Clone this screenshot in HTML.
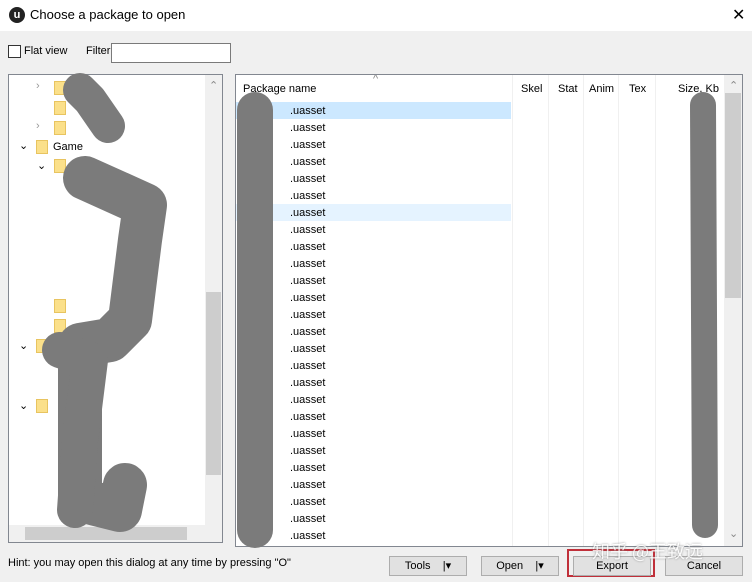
<!DOCTYPE html><html><head><style>
body{margin:0;width:752px;height:582px;background:#f0f0f0;font-family:"Liberation Sans",sans-serif;font-size:11px;color:#000;position:relative;overflow:hidden}
.a{position:absolute}
.btn{position:absolute;top:556px;height:18px;background:#e1e1e1;border:1px solid #adadad;text-align:center;line-height:18px;font-size:11px}
.f{position:absolute;width:12px;height:14px;background:#fbe08a;border:1px solid #e8c460;box-sizing:border-box}
.ch{position:absolute;color:#888;font-size:11px}
.gt{position:absolute;color:#999;font-size:11px}
</style></head><body>
<div class="a" style="left:0;top:0;width:752px;height:31px;background:#fff"></div>
<div class="a" style="left:9px;top:7px;width:16px;height:16px;border-radius:50%;background:#222;color:#fff;font-size:11px;font-weight:bold;text-align:center;line-height:16px">u</div>
<div class="a" style="left:30px;top:7px;font-size:13px">Choose a package to open</div>
<div class="a" style="left:732px;top:5px;font-size:16px">✕</div>
<div class="a" style="left:8px;top:45px;width:11px;height:11px;border:1px solid #333;background:#fff"></div>
<div class="a" style="left:24px;top:45px">Flat view</div>
<div class="a" style="left:86px;top:45px">Filter:</div>
<div class="a" style="left:111px;top:43px;width:118px;height:18px;border:1px solid #7a7a7a;background:#fff"></div>
<div class="a" style="left:8px;top:74px;width:213px;height:467px;border:1px solid #828790;background:#fff;overflow:hidden">
<div class="a" style="left:196px;top:0;width:17px;height:467px;background:#f0f0f0"></div>
<div class="a" style="left:197px;top:217px;width:15px;height:183px;background:#cdcdcd"></div>
<div class="a" style="left:0;top:450px;width:196px;height:17px;background:#f0f0f0"></div>
<div class="a" style="left:16px;top:452px;width:162px;height:13px;background:#cdcdcd"></div>
<div class="ch" style="left:200px;top:4px">⌃</div>
<div class="gt" style="left:27px;top:5px">›</div><div class="gt" style="left:27px;top:45px">›</div>
<div class="a" style="left:10px;top:64px">⌄</div><div class="a" style="left:28px;top:84px">⌄</div>
<div class="a" style="left:10px;top:264px">⌄</div><div class="a" style="left:10px;top:324px">⌄</div>
<div class="f" style="left:27px;top:65px"></div>
<div class="a" style="left:44px;top:66px">Game</div>
<div class="f" style="left:45px;top:6px"></div><div class="f" style="left:45px;top:26px"></div><div class="f" style="left:45px;top:46px"></div>
<div class="f" style="left:45px;top:84px"></div><div class="f" style="left:45px;top:224px"></div><div class="f" style="left:45px;top:244px"></div>
<div class="f" style="left:27px;top:264px"></div><div class="f" style="left:27px;top:324px"></div>
</div>
<div class="a" style="left:235px;top:74px;width:506px;height:471px;border:1px solid #828790;background:#fff;overflow:hidden">
<div class="a" style="left:7px;top:8px">Package name</div>
<div class="a" style="left:137px;top:-2px;color:#888">^</div>
<div class="a" style="left:285px;top:8px">Skel</div><div class="a" style="left:322px;top:8px">Stat</div>
<div class="a" style="left:353px;top:8px">Anim</div><div class="a" style="left:393px;top:8px">Tex</div>
<div class="a" style="left:442px;top:8px">Size, Kb</div>
<div class="a" style="left:276px;top:0;width:1px;height:471px;background:#f0f0f0"></div>
<div class="a" style="left:312px;top:0;width:1px;height:471px;background:#f0f0f0"></div>
<div class="a" style="left:347px;top:0;width:1px;height:471px;background:#f0f0f0"></div>
<div class="a" style="left:382px;top:0;width:1px;height:471px;background:#f0f0f0"></div>
<div class="a" style="left:419px;top:0;width:1px;height:471px;background:#f0f0f0"></div>
<div class="a" style="left:488px;top:0;width:18px;height:471px;background:#f0f0f0"></div>
<div class="a" style="left:489px;top:18px;width:16px;height:205px;background:#cdcdcd"></div>
<div class="ch" style="left:493px;top:4px">⌃</div><div class="ch" style="left:493px;top:452px">⌄</div>
<div class="a" style="left:0;top:27px;width:275px;height:17px;background:#cce8ff"></div>
<div class="a" style="left:0;top:129px;width:275px;height:17px;background:#e5f3ff"></div>
<div class="a" style="left:54px;top:28px;line-height:17px">
.uasset<br>.uasset<br>.uasset<br>.uasset<br>.uasset<br>.uasset<br>.uasset<br>.uasset<br>.uasset<br>.uasset<br>.uasset<br>.uasset<br>.uasset<br>.uasset<br>.uasset<br>.uasset<br>.uasset<br>.uasset<br>.uasset<br>.uasset<br>.uasset<br>.uasset<br>.uasset<br>.uasset<br>.uasset<br>.uasset</div>
</div>
<div class="a" style="left:8px;top:557px">Hint: you may open this dialog at any time by pressing "O"</div>
<div class="btn" style="left:389px;width:76px">Tools &nbsp; &nbsp;|▾</div>
<div class="btn" style="left:481px;width:76px">Open &nbsp; &nbsp;|▾</div>
<div class="a" style="left:567px;top:549px;width:88px;height:28px;border:2px solid #c0303a;box-sizing:border-box"></div>
<div class="btn" style="left:573px;width:76px">Export</div>
<div class="btn" style="left:665px;width:76px">Cancel</div>
<svg class="a" style="left:0;top:0" width="752" height="582"><g stroke="#7b7b7b" stroke-linecap="round" stroke-linejoin="round" fill="none">
<path d="M80 90 L90 100 L108 126" stroke-width="34"/>
<path d="M85 178 L145 205 L140 240 L130 320 L110 340 L80 345 L80 500 L120 510 L125 485" stroke-width="44"/>
<path d="M60 350 L90 360 L80 440 L75 510" stroke-width="36"/>
<path d="M255 110 L255 530" stroke-width="36"/>
<path d="M703 105 L705 525" stroke-width="26"/>
</g></svg>
<div class="a" style="left:592px;top:538px;font-size:18px;color:#fff;opacity:.8;font-family:'Noto Sans CJK SC',sans-serif;text-shadow:0 0 2px #777">知乎 @王致远</div>
</body></html>
